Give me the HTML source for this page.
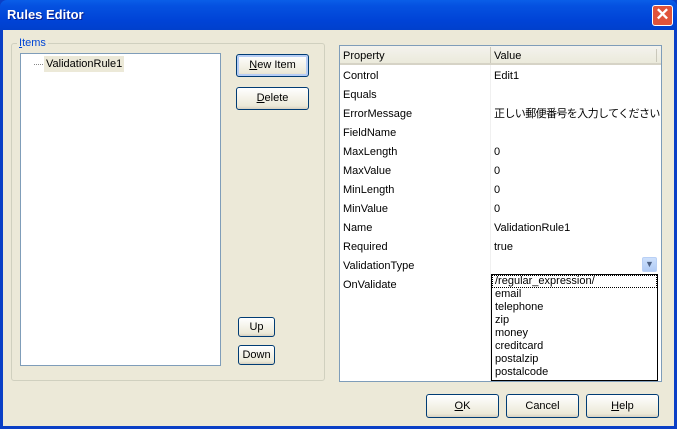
<!DOCTYPE html>
<html><head><style>
*{margin:0;padding:0;box-sizing:border-box}
body{width:677px;height:429px;overflow:hidden;font-family:Tahoma,"Liberation Sans","Noto Sans CJK JP",sans-serif;font-size:11px;background:#0a3fc6;position:relative}
.a{position:absolute}
.btn{position:absolute;background:linear-gradient(#fff,#ece9d8 85%,#d6d0c0);border:1px solid #003c74;border-radius:3px;text-align:center;color:#000}
.row{position:absolute;left:0;width:320px;height:19px;line-height:19px}
.row span{position:absolute;left:3px}
.row b{font-weight:normal;position:absolute;left:154px}
.dd div{height:13px;line-height:13px;padding-left:3px}
</style></head><body>
<div class="a" style="left:0;top:0;width:677px;height:30px;background:linear-gradient(#0a5ee8,#0551e0 20%,#0043d6 70%,#0040cc);border-radius:7px 7px 0 0"></div>
<div class="a" style="left:7px;top:7px;color:#fff;font-weight:bold;font-size:13px;font-family:'Liberation Sans',sans-serif;text-shadow:1px 1px #0a1e8c">Rules Editor</div>
<div class="a" style="left:652px;top:5px;width:21px;height:21px;background:#e0533a;border:1px solid #fff;border-radius:3px;color:#fff;font-size:17px;line-height:18px;text-align:center;font-weight:bold">✕</div>
<div class="a" style="left:3px;top:30px;width:671px;height:396px;background:#ece9d8"></div>
<div class="a" style="left:11px;top:43px;width:314px;height:338px;border:1px solid #d0d0bf;border-radius:3px"></div>
<div class="a" style="left:17px;top:37px;background:#ece9d8;color:#0046d5;padding:0 2px"><u>I</u>tems</div>
<div class="a" style="left:20px;top:53px;width:201px;height:313px;background:#fff;border:1px solid #7f9db9"></div>
<div class="a" style="left:34px;top:64px;width:9px;border-top:1px dotted #888"></div>
<div class="a" style="left:44px;top:56px;height:16px;line-height:16px;padding:0 2px;background:#ece9d8">ValidationRule1</div>
<div class="btn" style="left:236px;top:54px;width:73px;height:23px;line-height:21px;box-shadow:inset 0 0 0 2px #b6cdf5"><u>N</u>ew Item</div>
<div class="btn" style="left:236px;top:87px;width:73px;height:23px;line-height:21px"><u>D</u>elete</div>
<div class="btn" style="left:238px;top:317px;width:37px;height:20px;line-height:18px">Up</div>
<div class="btn" style="left:238px;top:345px;width:37px;height:20px;line-height:18px">Down</div>
<div class="a" style="left:339px;top:45px;width:323px;height:337px;background:#fff;border:1px solid #7f9db9">
 <div class="a" style="left:0;top:0;width:321px;height:19px;background:linear-gradient(#f4f3ee,#ebeadb);border-bottom:2px solid #d6d3c6"></div>
 <div class="a" style="left:3px;top:4px">Property</div>
 <div class="a" style="left:150px;top:1px;height:16px;border-left:1px solid #cac8bb"></div>
 <div class="a" style="left:154px;top:4px">Value</div>
 <div class="a" style="left:316px;top:3px;height:13px;border-left:1px solid #cac8bb"></div>
 <div class="a" style="left:150px;top:19px;height:316px;border-left:1px solid #f0f0f0"></div>
 <div style="position:absolute;left:0;top:21px">
 <div class="row" style="top:0"><span>Control</span><b>Edit1</b></div>
 <div class="row" style="top:19px"><span>Equals</span></div>
 <div class="row" style="top:38px"><span>ErrorMessage</span><b style="font-size:11px;white-space:nowrap;width:166px;overflow:hidden;letter-spacing:-0.6px">正しい郵便番号を入力してください</b></div>
 <div class="row" style="top:57px"><span>FieldName</span></div>
 <div class="row" style="top:76px"><span>MaxLength</span><b>0</b></div>
 <div class="row" style="top:95px"><span>MaxValue</span><b>0</b></div>
 <div class="row" style="top:114px"><span>MinLength</span><b>0</b></div>
 <div class="row" style="top:133px"><span>MinValue</span><b>0</b></div>
 <div class="row" style="top:152px"><span>Name</span><b>ValidationRule1</b></div>
 <div class="row" style="top:171px"><span>Required</span><b>true</b></div>
 <div class="row" style="top:190px"><span>ValidationType</span></div>
 <div class="row" style="top:209px"><span>OnValidate</span></div>
 </div>
 <div class="a" style="left:302px;top:211px;width:15px;height:15px;background:linear-gradient(#cde0fc,#b0cbf5);border:1px solid #b9d0f5;border-radius:2px;color:#4d6185;font-size:9px;line-height:13px;text-align:center">▼</div>
 <div class="a dd" style="left:151px;top:228px;width:167px;height:107px;border:1px solid #000;background:#fff">
  <div style="outline:1px dotted #000;outline-offset:-1px">/regular_expression/</div><div>email</div><div>telephone</div><div>zip</div><div>money</div><div>creditcard</div><div>postalzip</div><div>postalcode</div>
 </div>
</div>
<div class="btn" style="left:426px;top:394px;width:73px;height:24px;line-height:22px"><u>O</u>K</div>
<div class="btn" style="left:506px;top:394px;width:73px;height:24px;line-height:22px">Cancel</div>
<div class="btn" style="left:586px;top:394px;width:73px;height:24px;line-height:22px"><u>H</u>elp</div>
</body></html>
